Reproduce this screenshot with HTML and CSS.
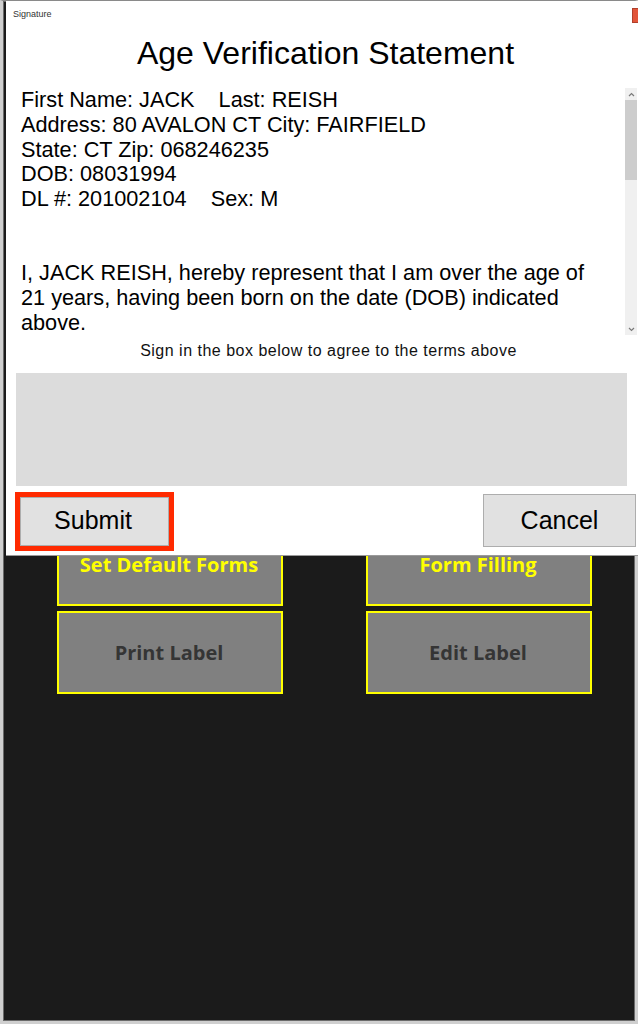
FILE: index.html
```html
<!DOCTYPE html>
<html>
<head>
<meta charset="utf-8">
<link rel="stylesheet" href="styles.css">
</head>
<body>
<div class="app">
  <div class="tiles">
    <div class="tile tile-yellow">Set Default Forms</div>
    <div class="tile tile-yellow">Form Filling</div>
    <div class="tile tile-dark">Print Label</div>
    <div class="tile tile-dark">Edit Label</div>
  </div>

  <div class="dialog">
    <div class="titlebar">Signature</div>
    <span class="close-btn"></span>
    <h1 class="heading">Age Verification Statement</h1>
    <div class="textbox">
      <div class="textbox-content">First Name: JACK    Last: REISH
Address: 80 AVALON CT City: FAIRFIELD
State: CT Zip: 068246235
DOB: 08031994
DL #: 201002104    Sex: M


I, JACK REISH, hereby represent that I am over the age of
21 years, having been born on the date (DOB) indicated
above.</div>
      <div class="scrollbar">
        <div class="sb-arrow">
          <svg width="7" height="5" viewBox="0 0 7 5"><polyline points="1,4 3.5,1.5 6,4" fill="none" stroke="#7a7a7a" stroke-width="1.2"/></svg>
        </div>
        <div class="sb-thumb"></div>
        <div class="sb-track"></div>
        <div class="sb-arrow">
          <svg width="7" height="5" viewBox="0 0 7 5"><polyline points="1,1 3.5,3.5 6,1" fill="none" stroke="#7a7a7a" stroke-width="1.2"/></svg>
        </div>
      </div>
    </div>
    <p class="sign-hint">Sign in the box below to agree to the terms above</p>
    <div class="sign-pad"></div>
    <div class="actions">
      <div class="highlight">
        <button class="btn btn-submit">Submit</button>
      </div>
      <button class="btn btn-cancel">Cancel</button>
    </div>
  </div>
</div>
</body>
</html>
```
FILE: styles.css
```css
* { box-sizing: border-box; }

html, body {
  margin: 0;
  padding: 0;
}

body {
  width: 638px;
  height: 1024px;
  background: #1b1b1b;
  font-family: "Liberation Sans", Arial, sans-serif;
  overflow: hidden;
}

.app {
  position: relative;
  width: 638px;
  height: 1024px;
  background: #1b1b1b;
  border: 3px solid #cfcfcf;
  border-top: 1px solid #8a8a8a;
  box-shadow: inset 1px 1px 0 #6a6a6a, inset -1px -1px 0 #6a6a6a;
}

/* background tiles */
.tiles {
  display: grid;
  grid-template-columns: 226px 226px;
  column-gap: 83px;
  row-gap: 5px;
  padding-top: 522px;
  padding-left: 54px;
}

.tile {
  height: 83px;
  background: #808080;
  border: 2px solid #ffff00;
  display: flex;
  align-items: center;
  justify-content: center;
  font-family: "Open Sans", "Noto Sans", sans-serif;
  font-weight: 700;
  font-size: 20px;
  padding-right: 2px;
}

.tile-yellow { color: #ffff00; }
.tile-dark { color: #353535; }

/* dialog */
.dialog {
  position: absolute;
  left: 3px;
  top: 0;
  width: 632px;
  height: 555px;
  background: #ffffff;
  border-bottom: 1px solid #9a9a9a;
  display: flex;
  flex-direction: column;
}

.titlebar {
  height: 34px;
  padding: 7px 0 0 7px;
  font-size: 9px;
  color: #333333;
  line-height: 12px;
}

.close-btn {
  position: absolute;
  right: 0;
  top: 7px;
  width: 6px;
  height: 15px;
  background: #e2553a;
  border: 1px solid #b0402c;
  border-right: none;
}

.heading {
  margin: 0;
  font-weight: 400;
  font-size: 32px;
  line-height: 36px;
  text-align: center;
  color: #000;
  padding-left: 7px;
}

.textbox {
  margin: 17px 1px 0 8px;
  height: 247px;
  display: flex;
}

.textbox-content {
  flex: 1;
  padding-left: 7px;
  font-size: 21.7px;
  line-height: 24.75px;
  white-space: pre;
  overflow: hidden;
  color: #000;
}

.scrollbar {
  width: 12px;
  display: flex;
  flex-direction: column;
  background: #f0f0f0;
}

.sb-arrow {
  height: 12px;
  display: flex;
  align-items: center;
  justify-content: center;
}

.sb-thumb {
  height: 80px;
  background: #cdcdcd;
}

.sb-track { flex: 1; }

.sign-hint {
  margin: 7px 0 0 0;
  font-size: 16px;
  letter-spacing: 0.5px;
  line-height: 18px;
  text-align: center;
  color: #111;
  padding-left: 13px;
}

.sign-pad {
  margin: 13px 11px 0 10px;
  height: 113px;
  background: #dcdcdc;
}

.actions {
  margin-top: 6px;
  height: 59px;
  display: flex;
  align-items: center;
  justify-content: space-between;
  padding: 0 2px 0 9px;
}

.highlight {
  width: 159px;
  height: 59px;
  border: 5px solid #ff2a00;
}

.btn {
  font-family: "Liberation Sans", Arial, sans-serif;
  font-size: 25px;
  color: #000;
  background: #e1e1e1;
  border: 1px solid #adadad;
  padding: 0;
  margin: 0;
}

.btn-submit {
  width: 100%;
  height: 100%;
  padding-bottom: 2px;
  padding-right: 3px;
}

.btn-cancel {
  width: 153px;
  height: 53px;
  margin-top: -2px;
}
```
